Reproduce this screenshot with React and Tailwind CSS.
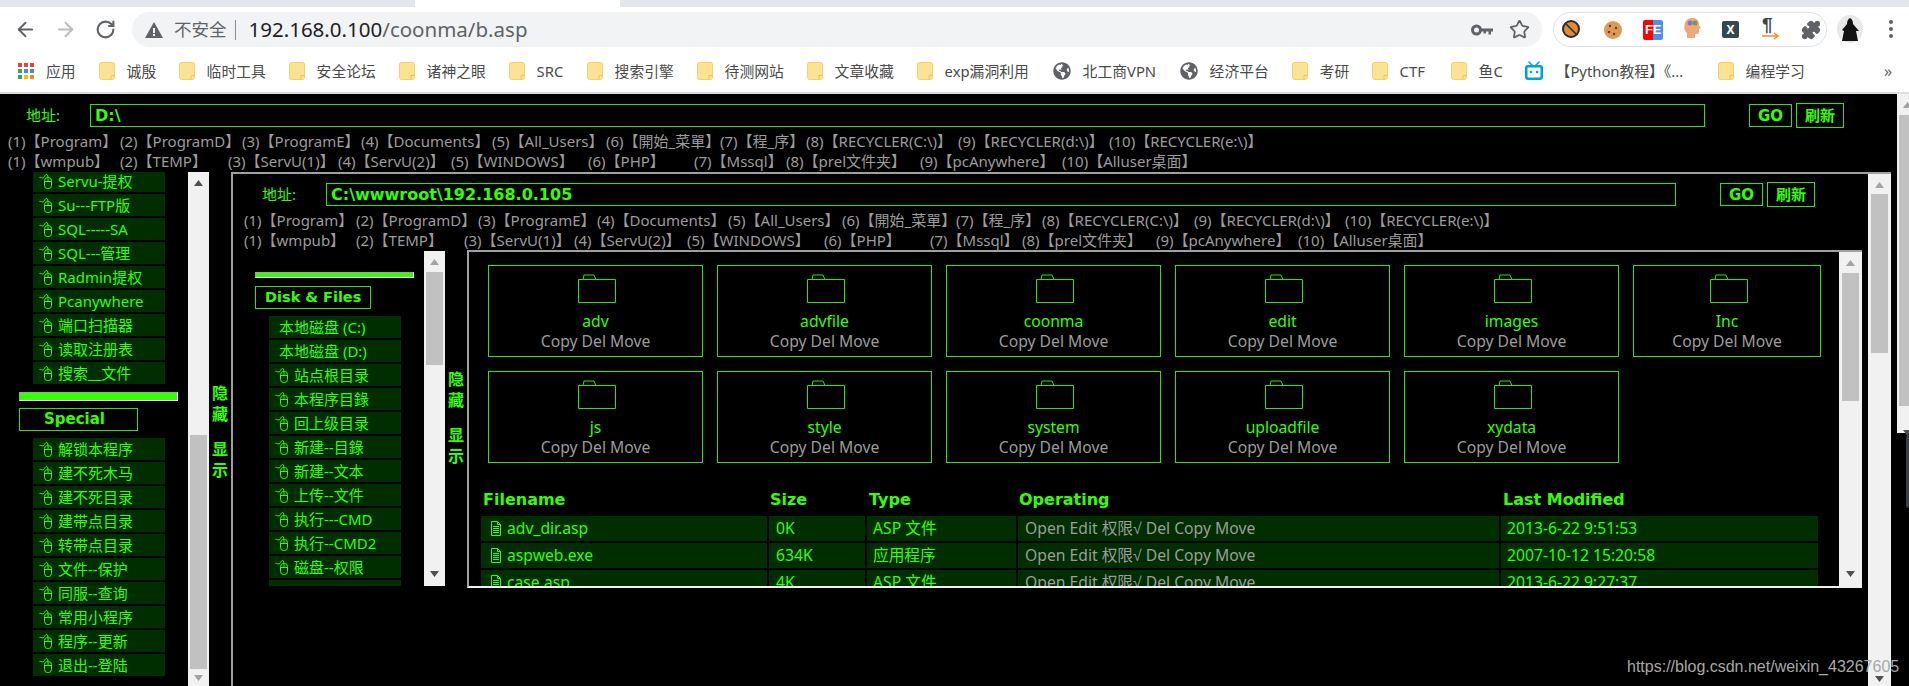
import { ArrowLeft, ArrowRight, RotateCw, Star, Puzzle } from "lucide-react";
import { FaGlobeAmericas } from "react-icons/fa";

const bookmarks = [
  { icon: "folder", label: "诚殷", w: "w-[30px]" },
  { icon: "folder", label: "临时工具", w: "w-[60px]" },
  { icon: "folder", label: "安全论坛", w: "w-[60px]" },
  { icon: "folder", label: "诸神之眼", w: "w-[60px]" },
  { icon: "folder", label: "SRC", w: "w-[28px]" },
  { icon: "folder", label: "搜索引擎", w: "w-[60px]" },
  { icon: "folder", label: "待测网站", w: "w-[60px]" },
  { icon: "folder", label: "文章收藏", w: "w-[60px]" },
  { icon: "folder", label: "exp漏洞利用", w: "w-[86px]" },
  { icon: "globe", label: "北工商VPN", w: "w-[75px]" },
  { icon: "globe", label: "经济平台", w: "w-[60px]" },
  { icon: "folder", label: "考研", w: "w-[30px]" },
  { icon: "folder", label: "CTF", w: "w-[29px]" },
  { icon: "folder", label: "鱼C", w: "w-[23px]" },
  { icon: "bili", label: "【Python教程】《...", w: "w-[140px]" },
  { icon: "folder", label: "编程学习", w: "w-[60px]" },
];

const linksOne = [
  ["(1)【Program】", "w-[112px]"],
  ["(2)【ProgramD】", "w-[122px]"],
  ["(3)【ProgramE】", "w-[119px]"],
  ["(4)【Documents】", "w-[131px]"],
  ["(5)【All_Users】", "w-[114px]"],
  ["(6)【開始_菜單】", "w-[114px]"],
  ["(7)【程_序】", "w-[86px]"],
  ["(8)【RECYCLER(C:\\)】", "w-[152px]"],
  ["(9)【RECYCLER(d:\\)】", "w-[151px]"],
  ["(10)【RECYCLER(e:\\)】", "w-[160px]"],
];

const linksTwo = [
  ["(1)【wmpub】", "w-[112px]"],
  ["(2)【TEMP】", "w-[108px]"],
  ["(3)【ServU(1)】", "w-[110px]"],
  ["(4)【ServU(2)】", "w-[113px]"],
  ["(5)【WINDOWS】", "w-[137px]"],
  ["(6)【PHP】", "w-[106px]"],
  ["(7)【Mssql】", "w-[92px]"],
  ["(8)【prel文件夹】", "w-[134px]"],
  ["(9)【pcAnywhere】", "w-[142px]"],
  ["(10)【Alluser桌面】", "w-[130px]"],
];

const toolsTop = ["Servu-提权", "Su---FTP版", "SQL-----SA", "SQL---管理", "Radmin提权", "Pcanywhere", "端口扫描器", "读取注册表", "搜索__文件"];
const toolsSpecial = ["解锁本程序", "建不死木马", "建不死目录", "建带点目录", "转带点目录", "文件--保护", "同服--查询", "常用小程序", "程序--更新", "退出--登陆"];
const diskTools = ["站点根目录", "本程序目錄", "回上级目录", "新建--目錄", "新建--文本", "上传--文件", "执行---CMD", "执行--CMD2", "磁盘--权限", ""];

const folders = ["adv", "advfile", "coonma", "edit", "images", "Inc", "js", "style", "system", "uploadfile", "xydata"];

const files = [
  { name: "adv_dir.asp", size: "0K", type: "ASP 文件", date: "2013-6-22 9:51:53" },
  { name: "aspweb.exe", size: "634K", type: "应用程序", date: "2007-10-12 15:20:58" },
  { name: "case.asp", size: "4K", type: "ASP 文件", date: "2013-6-22 9:27:37" },
];

function BookmarkFolder() {
  return (
    <svg width="16" height="18" viewBox="0 0 16 18" className="shrink-0">
      <rect x="0.5" y="0.5" width="15" height="17" rx="2" fill="#fde293" stroke="#f4d06f" />
      <path d="M12 17.5v-4h3.5" fill="none" stroke="#f0c24f" />
    </svg>
  );
}

function BiliIcon() {
  return (
    <svg width="20" height="20" viewBox="0 0 20 20" className="shrink-0">
      <path d="M5 1l3 3M15 1l-3 3" stroke="#00a1d6" strokeWidth="1.6" strokeLinecap="round" />
      <rect x="1" y="4" width="18" height="15" rx="3" fill="#00a1d6" />
      <rect x="3.5" y="6.5" width="13" height="10" rx="1" fill="#fff" />
      <circle cx="7" cy="11" r="1.3" fill="#00a1d6" />
      <circle cx="13" cy="11" r="1.3" fill="#00a1d6" />
    </svg>
  );
}

function MouseIcon() {
  return (
    <svg width="13" height="16" viewBox="0 0 13 16" className="shrink-0" fill="none" stroke="#33ff00" strokeWidth="1">
      <rect x="5.5" y="4.5" width="7" height="11" rx="3" />
      <path d="M5.5 8.5h7M9 4.5V8M9 4.5C9 2 8 1 7 1.5 6 2 5 5 4 5 2.500 5 2 4 0.500 4.500" />
    </svg>
  );
}

function FileIcon() {
  return (
    <svg width="12" height="15" viewBox="0 0 12 15" className="shrink-0" fill="none" stroke="#33ff00" strokeWidth="1">
      <path d="M1.500 .5h6l3 3v11h-9z" />
      <path d="M7.500 .5v3h3M3 5.500h6M3 7.500h6M3 9.500h6M3 11.500h6" />
    </svg>
  );
}

function FolderOutline() {
  return (
    <svg width="38" height="29" viewBox="0 0 38 29" className="ml-[3px] shrink-0" fill="none" stroke="#2ee600" strokeWidth="1">
      <path d="M.5 5.500h37v23H.5z" />
      <path d="M5 5.500l1-4.500h10l2 4.500" />
    </svg>
  );
}

function Arrow({ up, dark }) {
  return (
    <svg width="9" height="6" viewBox="0 0 9 6" fill={dark ? "#505050" : "#a3a3a3"}>
      <path d={up ? "M4.500 0L9 6H0z" : "M0 0h9L4.500 6z"} />
    </svg>
  );
}

function Scrollbar({ className, thumb, endClass = "h-[24px]", topDark, bottomDark = true }) {
  return (
    <div className={`flex flex-col items-center bg-[#f1f1f1] shrink-0 ${className}`}>
      <div className="h-[21px] shrink-0 flex items-center justify-center">
        <Arrow up dark={topDark} />
      </div>
      <div className={`w-[17px] bg-[#c1c1c1] shrink-0 ${thumb}`} />
      <div className={`mt-auto shrink-0 flex items-center justify-center ${endClass}`}>
        <Arrow dark={bottomDark} />
      </div>
    </div>
  );
}

function AddressBar({ value, wrapClass, inputClass }) {
  return (
    <div className={`flex items-center h-[25px] text-[#33ff00] ${wrapClass}`}>
      <span className="w-[64px] shrink-0 text-[15px]">地址:</span>
      <div className={`h-[23px] border border-[#2ee600] flex items-center pl-[4px] font-['DejaVu_Sans','Noto_Sans_CJK_SC',sans-serif] font-bold text-[16px] shrink-0 ${inputClass}`}>
        {value}
      </div>
      <button className="ml-[44px] w-[43px] h-[23px] border border-[#2ee600] font-['DejaVu_Sans',sans-serif] font-bold text-[15px]">GO</button>
      <button className="ml-[4px] w-[48px] h-[25px] border border-[#2ee600] font-bold text-[15px]">刷新</button>
    </div>
  );
}

function LinkRows({ className }) {
  const rows = [linksOne, linksTwo];
  return (
    <div className={`text-[15px] text-[#9c9c9c] mt-[3px] ${className}`}>
      {rows.map((row, i) => (
        <div key={i} className="flex h-[20px] items-center whitespace-nowrap">
          {row.map(([label, w]) => (
            <span key={label} className={`shrink-0 ${w}`}>{label}</span>
          ))}
        </div>
      ))}
    </div>
  );
}

function ToolRow({ label, icon = true }) {
  return (
    <div className={`h-[22px] w-[132px] mb-[2px] bg-[#002e00] flex items-center whitespace-nowrap text-[15px] text-[#33ff00] ${icon ? "pl-[6px] gap-[6px]" : "pl-[10px]"}`}>
      {icon && label && <MouseIcon />}
      <span>{label}</span>
    </div>
  );
}

function GreenBar({ className }) {
  return (
    <div className={`w-[159px] bg-[#33ff00] border border-t-[#a0a0a0] border-l-[#a0a0a0] border-r-white border-b-white ${className}`} />
  );
}

function SectionTitle({ children, className }) {
  return (
    <div className={`h-[23px] border border-[#2ee600] flex items-center font-['DejaVu_Sans',sans-serif] font-bold text-[#33ff00] ${className}`}>
      {children}
    </div>
  );
}

function HideToggle({ className }) {
  return (
    <div className={`w-[22px] shrink-0 flex flex-col items-center text-[16px] leading-[21px] font-bold text-[#33ff00] ${className}`}>
      <span>隐</span>
      <span>藏</span>
      <span className="mt-[14px]">显</span>
      <span>示</span>
    </div>
  );
}

function FolderCard({ name }) {
  return (
    <div className="h-[92px] border border-[#2ee600] flex flex-col items-center pt-[8px]">
      <FolderOutline />
      <div className="mt-[8px] leading-[20px] text-[15.7px] text-[#33ff00]">{name}</div>
      <div className="leading-[20px] text-[15.7px] text-[#9c9c9c]">Copy Del Move</div>
    </div>
  );
}

export default function App() {
  return (
    <div className="w-[1909px] h-[686px] overflow-hidden flex flex-col relative bg-black font-['Noto_Sans','Noto_Sans_CJK_SC',sans-serif]">

      {/* BROWSER CHROME */}
      <div className="h-[7px] bg-[#e3e6ea] flex shrink-0">
        <div className="w-[415px] rounded-br-lg" />
        <div className="w-[205px] bg-white" />
      </div>
      <div className="h-[45px] bg-white flex items-start pt-[5px] shrink-0">
        <ArrowLeft size={23} color="#5f6368" strokeWidth={2} className="ml-[14px] mt-[6px]" />
        <ArrowRight size={23} color="#b9bcc0" strokeWidth={2} className="ml-[17px] mt-[6px]" />
        <RotateCw size={21} color="#5f6368" strokeWidth={2.4} className="ml-[18px] mt-[7px]" />
        <div className="ml-[16px] w-[1410px] h-[35px] rounded-full bg-[#f1f3f4] flex items-center pl-[13px] pr-[10px] shrink-0">
          <svg width="18" height="16" viewBox="0 0 18 16">
            <path d="M9 0l9 16H0z" fill="#5f6368" />
            <path d="M8 6h2v5H8zM8 12h2v2H8z" fill="#f1f3f4" />
          </svg>
          <span className="ml-[11px] text-[17.5px] text-[#5f6368]">不安全</span>
          <span className="ml-[8px] w-[1px] h-[20px] bg-[#8a8d91]" />
          <span className="ml-[13px] text-[20.5px] text-[#202124]">192.168.0.100<span className="text-[#5f6368]">/coonma/b.asp</span></span>
          <svg width="22" height="12" viewBox="0 0 22 12" className="ml-auto mr-[16px]">
            <circle cx="5.500" cy="6" r="4" fill="none" stroke="#5f6368" strokeWidth="3" />
            <path d="M9 4.500h13v3h-2v3h-2.500v-3H15v2h-2.500v-2H9z" fill="#5f6368" />
          </svg>
          <Star size={21} color="#5f6368" strokeWidth={2} className="mr-[2px]" />
        </div>
        <div className="ml-[11px] w-[274px] h-[35px] rounded-full border border-[#dfe1e5] flex items-center pl-[6px] shrink-0">
          {/* extension icons */}
          <svg width="20" height="20" viewBox="0 0 20 20" className="shrink-0 ml-[1px] -mt-[2px]">
            <circle cx="10" cy="10" r="8" fill="#e08a3c" stroke="#2c2c2c" strokeWidth="2" />
            <path d="M4 4l12 12" stroke="#2c2c2c" strokeWidth="1.600" />
          </svg>
          <svg width="20" height="20" viewBox="0 0 20 20" className="shrink-0 ml-[22px]">
            <circle cx="10" cy="10" r="9" fill="#dd9a55" />
            <circle cx="7" cy="6" r="1.200" fill="#6b3d16" />
            <circle cx="13" cy="8" r="1.200" fill="#6b3d16" />
            <circle cx="6" cy="12" r="1.200" fill="#6b3d16" />
            <circle cx="11" cy="14" r="1.200" fill="#6b3d16" />
          </svg>
          <div className="ml-[20px] w-[20px] h-[20px] rounded-[2px] overflow-hidden shrink-0 flex bg-[linear-gradient(90deg,#f00_50%,#4d90f0_50%)] items-center justify-center text-white font-['Liberation_Sans',sans-serif] font-bold text-[13px] tracking-tight">FE</div>
          <svg width="18" height="22" viewBox="0 0 18 22" className="shrink-0 ml-[20px] -mt-[3px]">
            <path d="M4 21v-5C1 14 1 10 2 6c1-4 5-5 8-5 4 0 6 3 6 7l2 3-2 1v3c0 2-2 2-4 2v4z" fill="#f0a878" />
            <circle cx="7" cy="6" r="2.500" fill="#8a6fd1" />
            <circle cx="12" cy="6" r="2.500" fill="#5aa65a" />
          </svg>
          <div className="ml-[21px] w-[17px] h-[17px] rounded-[2px] bg-[#37474f] text-white text-[12px] font-bold flex items-center justify-center shrink-0">X</div>
          <div className="ml-[23px] w-[18px] h-[24px] shrink-0 relative -mt-[3px]">
            <span className="absolute -top-[2px] left-0 font-['Liberation_Sans',sans-serif] text-[#37474f] text-[19px] leading-[22px] font-bold">¶</span>
            <svg width="18" height="8" viewBox="0 0 18 8" className="absolute bottom-0 left-0">
              <path d="M0 4h16M12 1l4 3-4 3" fill="none" stroke="#f78c24" strokeWidth="1.500" />
            </svg>
          </div>
          <Puzzle size={20} color="#5f6368" fill="#5f6368" className="ml-[21px] shrink-0" />
        </div>
        <svg width="26" height="28" viewBox="0 0 26 28" className="ml-[10px] shrink-0 mt-[3px]">
          <ellipse cx="13" cy="14" rx="13" ry="14" fill="#e8e8e8" />
          <path d="M13 3c-2 1-3 3-3 6l-5 6 2 1-2 10h16l-2-10 3 0-6-7c0-3-1-5-3-6z" fill="#111" />
        </svg>
        <div className="ml-[26px] mt-[8px] flex flex-col gap-[3px] shrink-0">
          <span className="w-[4px] h-[4px] rounded-full bg-[#5f6368]" />
          <span className="w-[4px] h-[4px] rounded-full bg-[#5f6368]" />
          <span className="w-[4px] h-[4px] rounded-full bg-[#5f6368]" />
        </div>
      </div>
      <div className="h-[42px] bg-white border-b-2 border-[#dadce0] flex items-center pl-[18px] pb-[2px] shrink-0 text-[14.8px] text-[#4a4a4a] whitespace-nowrap relative">
        <svg width="16" height="17" viewBox="0 0 16 17" className="shrink-0">
          <path d="M0 0h4v4H0zM6 0h4v4H6zM12 0h4v4h-4z" fill="#ea4335" />
          <path d="M0 6h4v4H0z" fill="#34a853" />
          <path d="M6 6h4v4H6zM12 6h4v4h-4z" fill="#4285f4" />
          <path d="M0 12h4v4H0z" fill="#34a853" />
          <path d="M6 12h4v4H6z" fill="#fbbc05" />
          <path d="M12 12h4v4h-4z" fill="#f58a0b" />
        </svg>
        <span className="ml-[12px] mr-[23px]">应用</span>
        {bookmarks.map((b) => (
          <div key={b.label} className="flex items-center mr-[22px]">
            {b.icon === "folder" && <BookmarkFolder />}
            {b.icon === "globe" && <FaGlobeAmericas size={18} color="#5f6368" className="shrink-0" />}
            {b.icon === "bili" && <BiliIcon />}
            <span className={`ml-[12px] ${b.w}`}>{b.label}</span>
          </div>
        ))}
        <span className="absolute left-[1884px] text-[16px] text-[#5f6368]">»</span>
      </div>

      {/* PAGE */}
      <div className="flex-1 min-h-0 flex bg-black">
        <div className="w-[1897px] shrink-0 flex flex-col min-h-0">
          <AddressBar value="D:\" wrapClass="mt-[9px] pl-[26px]" inputClass="w-[1615px]" />
          <LinkRows className="pl-[8px] pb-[1px]" />

          <div className="flex h-[514px] min-h-0">
            {/* LEFT TOOLS */}
            <div className="w-[188px] h-full overflow-hidden shrink-0">
              <div className="pl-[33px] -mt-[2px]">
                {toolsTop.map((t) => <ToolRow key={t} label={t} />)}
              </div>
              <GreenBar className="ml-[19px] mt-[8px] h-[9px]" />
              <SectionTitle className="ml-[19px] mt-[7px] w-[119px] pl-[24px] text-[15px]">Special</SectionTitle>
              <div className="pl-[33px] mt-[7px]">
                {toolsSpecial.map((t) => <ToolRow key={t} label={t} />)}
              </div>
            </div>
            <Scrollbar className="w-[21px] h-full" thumb="mt-[242px] h-[234px]" endClass="h-[16px]" topDark bottomDark={false} />
            <HideToggle className="pt-[211px]" />

            {/* RIGHT FRAME */}
            <div className="w-[1660px] h-full flex border-l-2 border-t-2 border-[#a0a0a0] shrink-0">
              <div className="w-[1635px] shrink-0">
                <AddressBar value="C:\wwwroot\192.168.0.105" wrapClass="mt-[8px] pl-[29px]" inputClass="w-[1350px]" />
                <LinkRows className="pl-[11px]" />
                <div className="flex items-start">
                  {/* DISK MENU */}
                  <div className="w-[191px] h-[335px] mt-[1px] overflow-hidden shrink-0">
                    <GreenBar className="ml-[22px] mt-[21px] h-[6px]" />
                    <SectionTitle className="ml-[22px] mt-[8px] w-[116px] pl-[9px] text-[14.5px]">Disk &amp; Files</SectionTitle>
                    <div className="pl-[36px] mt-[7px]">
                      <ToolRow label="本地磁盘 (C:)" icon={false} />
                      <ToolRow label="本地磁盘 (D:)" icon={false} />
                      <div className="mt-[2px]">
                        {diskTools.map((t, i) => <ToolRow key={i} label={t} />)}
                      </div>
                    </div>
                  </div>
                  <Scrollbar className="w-[21px] h-[335px] mt-[1px]" thumb="h-[93px]" />
                  <HideToggle className="pt-[119px]" />

                  {/* FILE LIST */}
                  <div className="w-[1395px] h-[338px] flex border-l-2 border-t-2 border-l-[#a0a0a0] border-t-[#a0a0a0] border-b-2 border-b-[#f0f0f0] shrink-0">
                    <div className="w-[1370px] h-full overflow-hidden shrink-0 pl-[12px] pt-[13px]">
                      <div className="ml-[7px] grid grid-cols-[215px_215px_215px_215px_215px_188px] gap-[14px]">
                        {folders.map((name) => <FolderCard key={name} name={name} />)}
                      </div>
                      <div className="mt-[23px] grid grid-cols-[286px_96px_149px_481px_317px] gap-[2px] text-[15.7px] text-[#33ff00]">
                        <div className="h-[28px] pl-[2px] flex items-center font-['DejaVu_Sans',sans-serif] font-bold text-[16px]">Filename</div>
                        <div className="h-[28px] pl-[1px] flex items-center font-['DejaVu_Sans',sans-serif] font-bold text-[16px]">Size</div>
                        <div className="h-[28px] pl-[2px] flex items-center font-['DejaVu_Sans',sans-serif] font-bold text-[16px]">Type</div>
                        <div className="h-[28px] pl-[1px] flex items-center font-['DejaVu_Sans',sans-serif] font-bold text-[16px]">Operating</div>
                        <div className="h-[28px] pl-[2px] flex items-center font-['DejaVu_Sans',sans-serif] font-bold text-[16px]">Last Modified</div>
                        {files.map((f) => (
                          <div key={f.name} className="contents">
                            <div className="h-[25px] bg-[#002e00] pl-[9px] flex items-center gap-[5px]"><FileIcon />{f.name}</div>
                            <div className="h-[25px] bg-[#002e00] pl-[7px] flex items-center">{f.size}</div>
                            <div className="h-[25px] bg-[#002e00] pl-[6px] flex items-center">{f.type}</div>
                            <div className="h-[25px] bg-[#002e00] pl-[7px] flex items-center whitespace-pre text-[#9c9c9c]">Open Edit 权限<span className="font-['Liberation_Sans',sans-serif]">√</span> Del Copy Move</div>
                            <div className="h-[25px] bg-[#002e00] pl-[6px] flex items-center">{f.date}</div>
                          </div>
                        ))}
                      </div>
                    </div>
                    <Scrollbar className="w-[23px] h-full" thumb="h-[128px]" />
                  </div>
                </div>
              </div>
              <Scrollbar className="w-[23px] h-full" thumb="-mt-[1px] h-[159px]" endClass="h-[14px]" />
            </div>
          </div>
        </div>

        {/* OUTER SCROLLBAR, cut off at the window edge */}
        <div className="w-[12px] shrink-0 overflow-hidden flex flex-col">
          <Scrollbar className="w-[21px] h-[339px]" thumb="h-[291px]" endClass="h-[1px]" />
          <div className="mt-[2px] ml-[9px] w-[3px] h-[73px] rounded-l bg-[#3a3f44]" />
        </div>
      </div>

      {/* WATERMARK */}
      <div className="absolute left-[1627px] top-[657px] text-[16px] leading-[20px] text-[#a8a8a8] font-['Liberation_Sans',sans-serif] whitespace-nowrap">
        https://blog.csdn.net/weixin_43267605
      </div>
    </div>
  );
}
